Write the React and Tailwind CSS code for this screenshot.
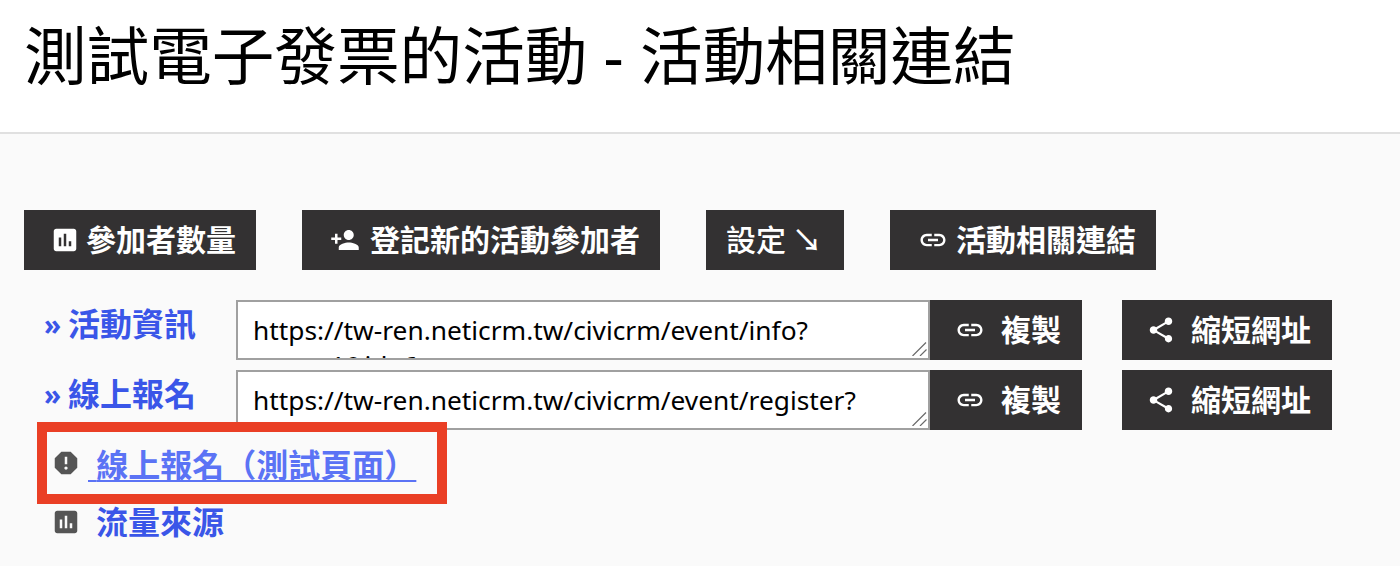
const font = { fontFamily: '"Noto Sans", "Noto Sans CJK TC", sans-serif' };

const icons = {
  chart: "M19 3H5c-1.1 0-2 .9-2 2v14c0 1.1.9 2 2 2h14c1.1 0 2-.9 2-2V5c0-1.1-.9-2-2-2zM9 17H7v-7h2v7zm4 0h-2V7h2v10zm4 0h-2v-4h2v4z",
  personAdd: "M15 12c2.21 0 4-1.79 4-4s-1.79-4-4-4-4 1.79-4 4 1.79 4 4 4zm-9-2V7H4v3H1v2h3v3h2v-3h3v-2H6zm9 4c-2.67 0-8 1.34-8 4v2h16v-2c0-2.66-5.33-4-8-4z",
  link: "M3.9 12c0-1.71 1.39-3.1 3.1-3.1h4V7H7c-2.76 0-5 2.24-5 5s2.24 5 5 5h4v-1.9H7c-1.71 0-3.1-1.39-3.1-3.1zM8 13h8v-2H8v2zm9-6h-4v1.9h4c1.71 0 3.1 1.39 3.1 3.1s-1.39 3.1-3.1 3.1h-4V17h4c2.76 0 5-2.24 5-5s-2.24-5-5-5z",
  share: "M18 16.08c-.76 0-1.44.3-1.96.77L8.91 12.7c.05-.23.09-.46.09-.7s-.04-.47-.09-.7l7.05-4.11c.54.5 1.25.81 2.04.81 1.66 0 3-1.34 3-3s-1.34-3-3-3-3 1.34-3 3c0 .24.04.47.09.7L8.04 9.81C7.5 9.31 6.79 9 6 9c-1.66 0-3 1.34-3 3s1.34 3 3 3c.79 0 1.5-.31 2.04-.81l7.12 4.16c-.05.21-.08.43-.08.65 0 1.61 1.31 2.92 2.92 2.92 1.61 0 2.92-1.31 2.92-2.92s-1.31-2.92-2.92-2.92z",
  report: "M15.73 3H8.27L3 8.27v7.46L8.27 21h7.46L21 15.73V8.27L15.73 3zM12 17.3c-.72 0-1.3-.58-1.3-1.3 0-.72.58-1.3 1.3-1.3.72 0 1.3.58 1.3 1.3 0 .72-.58 1.3-1.3 1.3zm1-4.3h-2V7h2v6z",
};

function Icon({ name, className }) {
  return (
    <svg viewBox="0 0 24 24" fill="currentColor" className={className}>
      <path d={icons[name]} />
    </svg>
  );
}

function ActionButton({ icon, label, className }) {
  return (
    <a className={`flex h-[60px] items-center bg-[#333132] text-[30px] font-bold leading-none text-white ${className}`}>
      {icon && <Icon name={icon} className="h-[30px] w-[30px] shrink-0" />}
      <span>{label}</span>
    </a>
  );
}

function UrlRow({ label, url }) {
  return (
    <div className="flex h-[60px]">
      <a className="flex w-[212px] items-center pb-[12px] pl-[20px] text-[32px] font-bold leading-none text-[#3a56e8]">
        <span className="w-[24px] text-[28px]">»</span>
        <span>{label}</span>
      </a>
      <div className="relative h-[60px] w-[694px]">
        <textarea
          readOnly
          value={url}
          className="block h-full w-full resize-none border-2 border-[#a0a0a0] bg-white px-[15px] py-[11px] text-[26.3px] leading-[35px] text-black outline-none"
        />
        {/* resize handle */}
        <svg viewBox="0 0 15 14" className="absolute bottom-[4px] right-[3px] h-[14px] w-[15px]" stroke="#6b6b6b" strokeWidth="1.2">
          <path d="M0.5 14L14 0.5M8 14L14.5 7.5" />
        </svg>
      </div>
      <ActionButton icon="link" label="複製" className="w-[152px] gap-[16px] pl-[25px]" />
      <ActionButton icon="share" label="縮短網址" className="ml-[40px] w-[210px] gap-[15px] pl-[24px]" />
    </div>
  );
}

export default function App() {
  return (
    <div className="h-[566px] overflow-hidden bg-[#fafafa]" style={font}>
      <header className="h-[134px] border-b-2 border-[#e0e0e0] bg-white pl-[24px] pt-[13px]">
        <h1 className="text-[62.6px] font-normal leading-[84px] text-black">測試電子發票的活動 - 活動相關連結</h1>
      </header>

      <main className="pl-[24px] pt-[76px]">
        <div className="flex gap-[46px]">
          <ActionButton icon="chart" label="參加者數量" className="w-[232px] gap-[6px] pl-[26px]" />
          <ActionButton icon="personAdd" label="登記新的活動參加者" className="w-[358px] gap-[10px] pl-[28px]" />
          <ActionButton
            label={
              <span className="font-medium">
                設定<span className="ml-[6px]">↘</span>
              </span>
            }
            className="w-[138px] pl-[20px]"
          />
          <ActionButton icon="link" label="活動相關連結" className="w-[266px] gap-[8px] pl-[28px]" />
        </div>

        <div className="mt-[30px] flex flex-col gap-[10px]">
          <UrlRow label="活動資訊" url="https://tw-ren.neticrm.tw/civicrm/event/info?reset=1&id=6" />
          <UrlRow label="線上報名" url="https://tw-ren.neticrm.tw/civicrm/event/register?reset=1&id=6" />
        </div>

        <div className="relative mt-[8px] flex h-[50px] items-center pl-[27px] text-[#555555]">
          <Icon name="report" className="h-[30px] w-[30px]" />
          <a className="ml-[7px] mt-[3px] text-[32px] font-bold leading-[44px] text-[#5b73f5] underline decoration-2 underline-offset-[3px]">
            {"\u00a0"}線上報名（測試頁面）
          </a>
          <div className="absolute left-[13px] top-[-16px] h-[82px] w-[410px] border-[10px] border-[#ea3f25]" />
        </div>

        <div className="mt-[9px] flex h-[50px] items-center pl-[27px] text-[#555555]">
          <Icon name="chart" className="h-[30px] w-[30px]" />
          <a className="ml-[15px] text-[32px] font-bold leading-[44px] text-[#3a56e8]">流量來源</a>
        </div>
      </main>
    </div>
  );
}
